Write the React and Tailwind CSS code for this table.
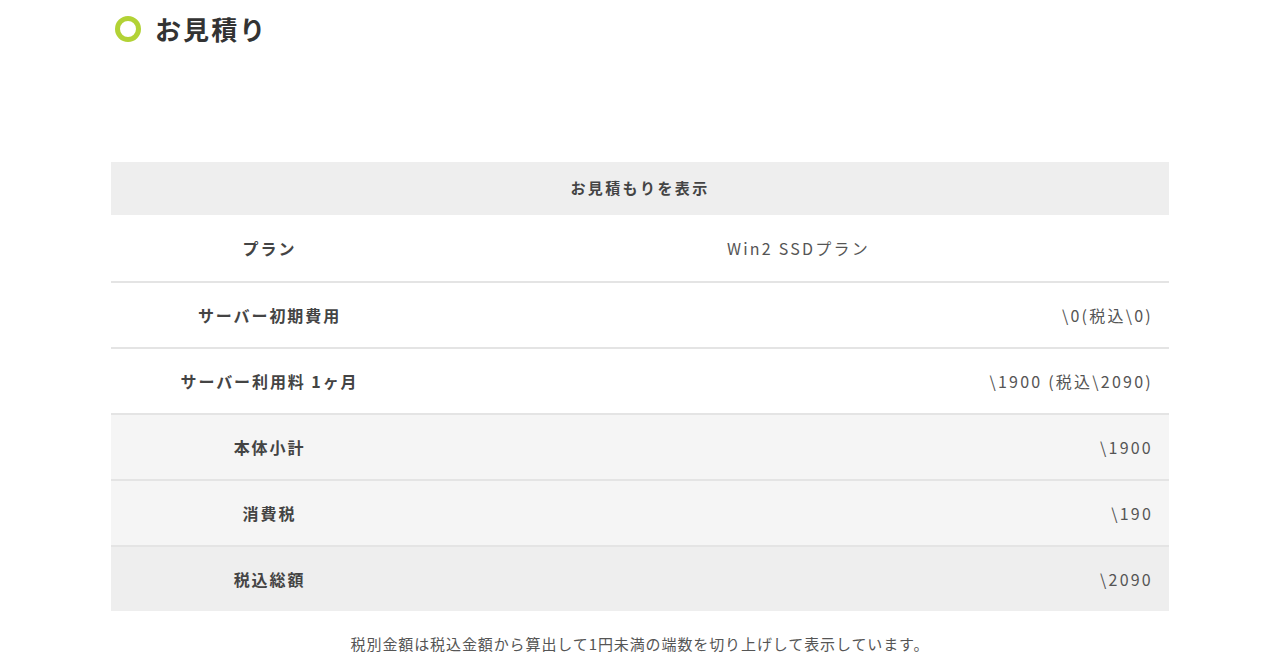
const font = { fontFamily: '"Noto Sans CJK JP", "Noto Sans", sans-serif' };

const rows = [
  { label: 'プラン', value: 'Win2 SSDプラン', center: true, bg: 'bg-white' },
  { label: 'サーバー初期費用', value: '\\0(税込\\0)', bg: 'bg-white' },
  { label: 'サーバー利用料 1ヶ月', value: '\\1900 (税込\\2090)', bg: 'bg-white' },
  { label: '本体小計', value: '\\1900', bg: 'bg-[#f5f5f5]' },
  { label: '消費税', value: '\\190', bg: 'bg-[#f5f5f5]' },
  { label: '税込総額', value: '\\2090', bg: 'bg-[#eeeeee]' },
];

export default function App() {
  return (
    <div className="w-[1280px] h-[666px] bg-white text-[#333] overflow-hidden" style={font}>
      <div className="w-[1058px] ml-[111px]">
        {/* Title */}
        <div className="flex items-center h-[58px] pl-[4px]">
          <span className="w-[26px] h-[26px] rounded-full border-[5px] border-[#b2d235] shrink-0" />
          <h1 className="ml-[14px] text-[26px] font-bold tracking-[0.08em] text-[#333] leading-none">お見積り</h1>
        </div>

        {/* Estimate table */}
        <div className="mt-[104px]">
          <div className="h-[53px] bg-[#eeeeee] flex items-center justify-center text-[15px] font-bold tracking-[0.16em] text-[#444]">
            お見積もりを表示
          </div>
          {rows.map((r, i) => (
            <div
              key={r.label}
              className={`flex items-center h-[66px] ${r.bg} ${i > 0 ? 'border-t-2 border-[#e4e4e4]' : ''}`}
            >
              <div className="w-[317px] text-center text-[16px] font-bold tracking-[0.12em] text-[#444]">
                {r.label}
              </div>
              <div
                className={`flex-1 text-[16px] tracking-[0.14em] text-[#555] ${r.center ? 'text-center' : 'text-right pr-[16px]'}`}
              >
                {r.value}
              </div>
            </div>
          ))}
        </div>

        <p className="mt-[22px] text-center text-[15px] tracking-[0.06em] text-[#555]">
          税別金額は税込金額から算出して1円未満の端数を切り上げして表示しています。
        </p>
      </div>
    </div>
  );
}
